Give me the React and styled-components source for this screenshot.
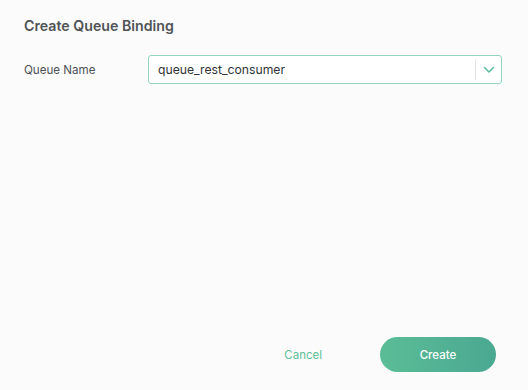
import React from "react";
import styled, { createGlobalStyle } from "styled-components";

const Global = createGlobalStyle`
  html, body { margin: 0; padding: 0; background: #fbfbfb; }
  body { font-family: Inter, "Noto Sans", sans-serif; }
  * { box-sizing: border-box; }
`;

const Dialog = styled.div`
  width: 528px;
  height: 390px;
  background: #fbfbfb;
  display: flex;
  flex-direction: column;
  padding: 16px 32px 18px 24px;
`;

const Title = styled.h2`
  margin: 0;
  font-size: 14.2px;
  font-weight: 600;
  color: #505356;
  line-height: 20px;
`;

const Field = styled.div`
  display: flex;
  align-items: center;
  margin-top: 19px;
`;

const Label = styled.label`
  width: 124px;
  font-size: 11.6px;
  color: #4d5156;
`;

const Select = styled.div`
  flex: 1;
  height: 29px;
  margin-right: -6px;
  border: 1.5px solid #93d4bc;
  border-radius: 3px;
  background: #fff;
  display: flex;
  align-items: center;
`;

const Value = styled.span`
  flex: 1;
  padding-left: 9px;
  font-size: 12.2px;
  color: #2f3336;
`;

const Divider = styled.span`
  width: 1px;
  align-self: stretch;
  margin: 3px 0;
  background: #e3e6e5;
`;

const Chevron = styled.span`
  width: 25px;
  display: flex;
  justify-content: center;
  align-items: center;
`;

const Footer = styled.div`
  margin-top: auto;
  display: flex;
  justify-content: flex-end;
  align-items: center;
  gap: 58px;
`;

const TextButton = styled.button`
  border: none;
  background: none;
  padding: 0;
  font-family: inherit;
  font-size: 11.5px;
  color: #5dbf9a;
  cursor: pointer;
`;

const PrimaryButton = styled.button`
  width: 116px;
  height: 35px;
  border: none;
  border-radius: 18px;
  background: linear-gradient(90deg, #5bbd97, #4aa891);
  color: #fff;
  font-family: inherit;
  font-size: 11.5px;
  font-weight: 500;
  cursor: pointer;
`;

export default function App() {
  return (
    <>
      <Global />
      <Dialog>
        <Title>Create Queue Binding</Title>
        <Field>
          <Label>Queue Name</Label>
          <Select>
            <Value>queue_rest_consumer</Value>
            <Divider />
            <Chevron>
              <svg width="12" height="8" viewBox="0 0 12 8" fill="none">
                <path d="M1.5 1.5L6 6l4.5-4.5" stroke="#5dbf9a" strokeWidth="1.6" strokeLinecap="round" strokeLinejoin="round" />
              </svg>
            </Chevron>
          </Select>
        </Field>
        <Footer>
          <TextButton>Cancel</TextButton>
          <PrimaryButton>Create</PrimaryButton>
        </Footer>
      </Dialog>
    </>
  );
}
